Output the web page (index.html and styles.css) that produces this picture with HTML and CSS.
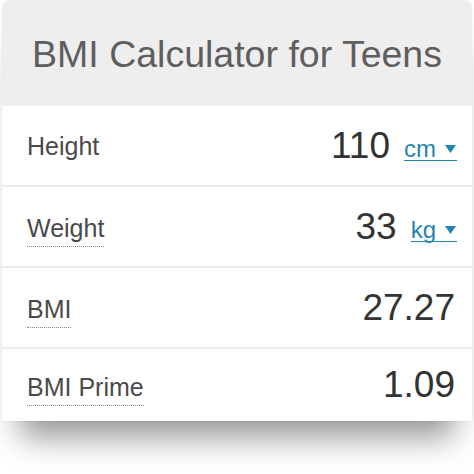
FILE: index.html
```html
<!DOCTYPE html>
<html>
<head>
<meta charset="utf-8">
<link rel="stylesheet" href="styles.css">
</head>
<body>
<div class="page">
  <div class="card">
    <div class="header"><h1 class="title">BMI Calculator for Teens</h1></div>
    <div class="row">
      <span class="label">Height</span>
      <span class="right"><span class="value">110</span><span class="unit">cm<svg class="caret" width="11" height="8" viewBox="0 0 11 8"><path d="M0 0H11L5.5 8Z" fill="#1f86b4"/></svg></span></span>
    </div>
    <div class="row">
      <span class="label dotted">Weight</span>
      <span class="right"><span class="value">33</span><span class="unit">kg<svg class="caret" width="11" height="8" viewBox="0 0 11 8"><path d="M0 0H11L5.5 8Z" fill="#1f86b4"/></svg></span></span>
    </div>
    <div class="row">
      <span class="label dotted">BMI</span>
      <span class="right"><span class="value">27.27</span></span>
    </div>
    <div class="row last">
      <span class="label dotted">BMI Prime</span>
      <span class="right"><span class="value">1.09</span></span>
    </div>
  </div>
</div>
</body>
</html>
```
FILE: styles.css
```css
html, body {
  margin: 0;
  padding: 0;
  background: #ffffff;
}
body {
  font-family: "Liberation Sans", Arial, Helvetica, sans-serif;
  width: 474px;
  height: 474px;
  overflow: hidden;
}
.page {
  padding: 0 2px;
}
.card {
  background: #ffffff;
  border-radius: 8px 8px 0 0;
  box-shadow: 0 0 2px rgba(0,0,0,0.12), 0 34px 30px -18px rgba(0,0,0,0.42);
}
.header {
  height: 106px;
  background: #eeeeee;
  border-radius: 8px 8px 0 0;
  display: flex;
  align-items: center;
  justify-content: center;
}
.title {
  margin: 0;
  font-weight: normal;
  font-size: 37.5px;
  color: #5e5e5e;
  padding-top: 2px;
}
.row {
  height: 79px;
  display: flex;
  align-items: center;
  justify-content: space-between;
  padding: 0 15px 0 25px;
  border-bottom: 2px solid #ececec;
}
.row.last {
  height: 72px;
  border-bottom: none;
}
.label {
  font-size: 25px;
  color: #4a4a4a;
  padding-top: 2px;
}
.label.dotted {
  border-bottom: 1px dotted #8a8a8a;
  padding-bottom: 3px;
  margin-top: 6px;
}
.right {
  display: flex;
  align-items: center;
}
.value {
  font-size: 37px;
  color: #333333;
  margin-right: 2px;
}
.unit {
  display: flex;
  align-items: center;
  margin-left: 12px;
  font-size: 24px;
  color: #1f86b4;
  border-bottom: 1.5px solid #1f86b4;
  line-height: 22px;
  margin-top: 8px;
}
.caret {
  margin-left: 9px;
  margin-right: 1px;
}
```
